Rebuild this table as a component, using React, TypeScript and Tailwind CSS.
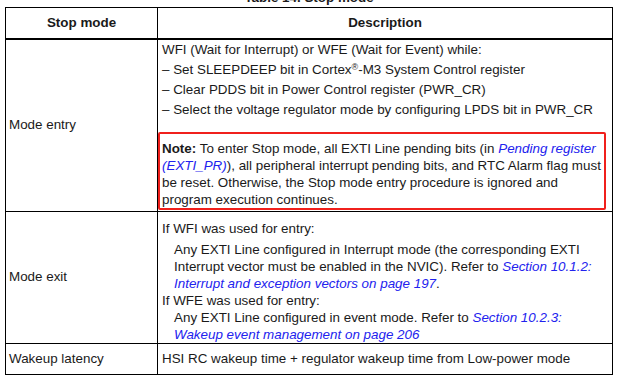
import React from "react";

const link = "italic text-[#2222ee]";

function Line({ children, className = "" }: { children: React.ReactNode; className?: string }) {
  return <p className={"leading-[17px] whitespace-nowrap " + className}>{children}</p>;
}

export default function App() {
  return (
    <div
      className="w-[633px] h-[377px] overflow-hidden bg-white text-[#1a1a1a] text-[13.4px]"
      style={{ fontFamily: '"Liberation Sans", Arial, sans-serif' }}
    >
      {/* cut-off caption */}
      <div className="h-[7px] overflow-hidden flex items-end justify-center w-[618px]">
        <span className="font-bold leading-[14px] mb-[2px]">Table 14. Stop mode</span>
      </div>

      <div className="ml-[5px] w-[608px] border border-black">
        {/* header */}
        <div className="grid grid-cols-[152px_454px] border-b-2 border-black">
          <div className="h-[30px] border-r border-black flex items-center justify-center font-bold">
            Stop mode
          </div>
          <div className="h-[30px] flex items-center justify-center font-bold">Description</div>
        </div>

        {/* mode entry */}
        <div className="grid grid-cols-[152px_454px] border-b border-black">
          <div className="border-r border-black flex items-center pl-[3px]">Mode entry</div>
          <div className="pl-[4px] pt-[1px] pb-[1px]">
            <Line className="mb-[3px]">WFI (Wait for Interrupt) or WFE (Wait for Event) while:</Line>
            <Line className="mb-[3px]">
              – Set SLEEPDEEP bit in Cortex<sup className="text-[9px]">®</sup>-M3 System Control register
            </Line>
            <Line className="mb-[3px]">– Clear PDDS bit in Power Control register (PWR_CR)</Line>
            <Line>– Select the voltage regulator mode by configuring LPDS bit in PWR_CR</Line>
            <div className="mt-[14px] -ml-[4px] w-[448px] border-2 border-[#f0201c] rounded-[2px] pl-[2px] pt-[6px]">
              <Line>
                <span className="font-bold">Note:</span> To enter Stop mode, all EXTI Line pending bits (in{" "}
                <span className={link}>Pending register</span>
              </Line>
              <Line>
                <span className={link}>(EXTI_PR)</span>), all peripheral interrupt pending bits, and RTC Alarm flag must
              </Line>
              <Line>be reset. Otherwise, the Stop mode entry procedure is ignored and</Line>
              <Line>program execution continues.</Line>
            </div>
          </div>
        </div>

        {/* mode exit */}
        <div className="grid grid-cols-[152px_454px] border-b border-black">
          <div className="border-r border-black flex items-center pl-[3px]">Mode exit</div>
          <div className="pl-[4px] pt-[8px]">
            <Line className="mb-[4px]">If WFI was used for entry:</Line>
            <div className="pl-[12px]">
              <Line>Any EXTI Line configured in Interrupt mode (the corresponding EXTI</Line>
              <Line>
                Interrupt vector must be enabled in the NVIC). Refer to{" "}
                <span className={link}>Section 10.1.2:</span>
              </Line>
              <Line>
                <span className={link}>Interrupt and exception vectors on page 197</span>.
              </Line>
            </div>
            <Line>If WFE was used for entry:</Line>
            <div className="pl-[12px]">
              <Line>
                Any EXTI Line configured in event mode. Refer to <span className={link}>Section 10.2.3:</span>
              </Line>
              <Line>
                <span className={link}>Wakeup event management on page 206</span>
              </Line>
            </div>
          </div>
        </div>

        {/* wakeup latency */}
        <div className="grid grid-cols-[152px_454px]">
          <div className="h-[30px] border-r border-black flex items-center pl-[3px]">Wakeup latency</div>
          <div className="h-[30px] flex items-center pl-[4px]">
            HSI RC wakeup time + regulator wakeup time from Low-power mode
          </div>
        </div>
      </div>
    </div>
  );
}
